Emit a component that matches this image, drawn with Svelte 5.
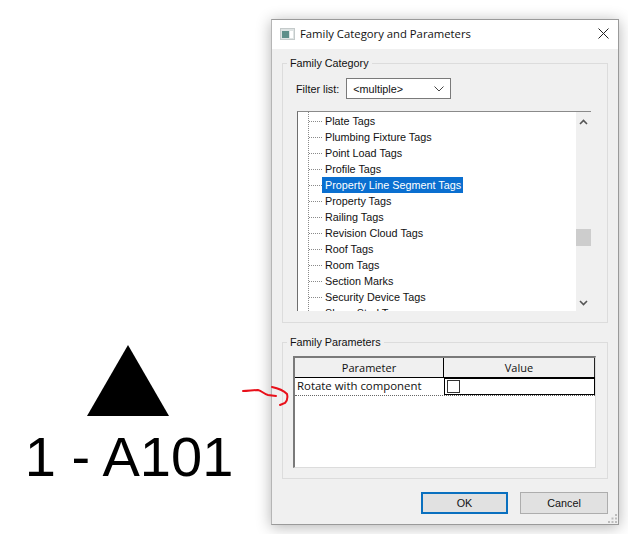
<script lang="ts">
  const items = [
    'Plate Tags',
    'Plumbing Fixture Tags',
    'Point Load Tags',
    'Profile Tags',
    'Property Line Segment Tags',
    'Property Tags',
    'Railing Tags',
    'Revision Cloud Tags',
    'Roof Tags',
    'Room Tags',
    'Section Marks',
    'Security Device Tags',
    'Shear Stud Tags'
  ];
  const selected = 'Property Line Segment Tags';
</script>

<div class="page">
  <div class="symbol">
    <svg class="triangle" width="82" height="71" viewBox="0 0 82 71">
      <polygon points="41,0 82,71 0,71" fill="#000" />
    </svg>
    <div class="mark">1 - A101</div>
  </div>

  <div class="dialog">
    <header class="titlebar">
      <svg width="15" height="12" viewBox="0 0 15 12">
        <rect x="0.5" y="0.5" width="14" height="11" fill="#dfe4e4" stroke="#c4caca" />
        <rect x="2" y="3" width="7" height="7" fill="#5f8f8a" />
        <rect x="10" y="3" width="3" height="7" fill="#fff" />
      </svg>
      <span class="title">Family Category and Parameters</span>
      <svg class="close" width="11" height="11" viewBox="0 0 11 11">
        <path d="M0.5 0.5 L10.5 10.5 M10.5 0.5 L0.5 10.5" stroke="#222" fill="none" />
      </svg>
    </header>

    <div class="body">
      <fieldset class="category">
        <legend>Family Category</legend>
        <div class="filter">
          <span>Filter list:</span>
          <div class="select">
            <span>&lt;multiple&gt;</span>
            <svg width="10" height="6" viewBox="0 0 10 6">
              <path d="M0.5 0.5 L5 5 L9.5 0.5" stroke="#444" fill="none" />
            </svg>
          </div>
        </div>
        <div class="tree">
          <ul>
            {#each items as item}
              <li><span class:selected={item === selected}>{item}</span></li>
            {/each}
          </ul>
          <div class="scrollbar">
            <svg width="9" height="6" viewBox="0 0 9 6">
              <path d="M1 5 L4.5 1.5 L8 5" stroke="#555" stroke-width="1.6" fill="none" />
            </svg>
            <div class="track"><div class="thumb"></div></div>
            <svg width="9" height="6" viewBox="0 0 9 6">
              <path d="M1 1 L4.5 4.5 L8 1" stroke="#555" stroke-width="1.6" fill="none" />
            </svg>
          </div>
        </div>
      </fieldset>

      <fieldset class="parameters">
        <legend>Family Parameters</legend>
        <div class="table">
          <div class="head">
            <div class="col-name">Parameter</div>
            <div class="col-value">Value</div>
          </div>
          <div class="row">
            <div class="cell-name">Rotate with component</div>
            <div class="cell-value"><div class="checkbox"></div></div>
          </div>
        </div>
      </fieldset>

      <div class="actions">
        <button class="ok">OK</button>
        <button>Cancel</button>
      </div>
    </div>

    <svg class="grip" width="9" height="9" viewBox="0 0 9 9" fill="#bdbdbd">
      <rect x="7" y="0" width="2" height="2" />
      <rect x="3.5" y="3.5" width="2" height="2" />
      <rect x="7" y="3.5" width="2" height="2" />
      <rect x="0" y="7" width="2" height="2" />
      <rect x="3.5" y="7" width="2" height="2" />
      <rect x="7" y="7" width="2" height="2" />
    </svg>
  </div>

  <!-- hand drawn markup on top of the screenshot -->
  <svg class="arrow" width="50" height="24" viewBox="0 0 50 24">
    <path
      d="M1 6 C6 6 11 5 16 5 C20 6 22 9 26 10 L34 11 M30 2 C35 3 41 5 45 9 C46 13 45 16 43 18 L38 20"
      stroke="#e8101a"
      stroke-width="2"
      stroke-linecap="round"
      fill="none"
    />
  </svg>
</div>

<style>
  :global(body) {
    margin: 0;
    background: #fff;
  }

  .page {
    position: relative;
    display: flex;
    width: 628px;
    height: 534px;
    overflow: hidden;
    background: #fff;
    color: #111;
    font-family: 'Liberation Sans', Arial, sans-serif;
    font-size: 10.8px;
  }

  .symbol {
    width: 256px;
    margin-right: 15px;
    padding-top: 345px;
    display: flex;
    flex-direction: column;
    align-items: center;
  }

  .triangle {
    display: block;
  }

  .mark {
    margin-top: 9px;
    padding-left: 2px;
    font-size: 56px;
    line-height: 64px;
    color: #000;
    white-space: nowrap;
  }

  .dialog {
    position: relative;
    width: 348px;
    height: 506px;
    margin-top: 19px;
    background: #f0f0f0;
    border: 1px solid #9a9a9a;
    border-left-color: #b5b5b5;
    box-sizing: border-box;
    box-shadow: 0 2px 14px rgba(0, 0, 0, 0.3);
  }

  .titlebar {
    display: flex;
    align-items: center;
    height: 29px;
    padding: 0 9px 2px 8px;
    background: #fff;
    box-sizing: border-box;
  }

  .title {
    margin-left: 5px;
    flex: 1;
    font-family: 'Open Sans', 'Noto Sans', sans-serif;
    font-size: 11.3px;
  }

  .body {
    padding: 6px 10px 0;
  }

  fieldset {
    margin: 0;
    padding: 0;
    border: 1px solid #dcdcdc;
    box-sizing: border-box;
  }

  legend {
    margin-left: 4px;
    padding: 0 3px;
    line-height: 16px;
  }

  .category {
    height: 268px;
  }

  .filter {
    display: flex;
    align-items: center;
    height: 21px;
    margin: 7px 0 0 13px;
  }

  .filter > span {
    margin-right: 7px;
  }

  .select {
    display: flex;
    align-items: center;
    justify-content: space-between;
    width: 105px;
    height: 21px;
    padding: 0 6px;
    background: #fff;
    border: 1px solid #7a7a7a;
    box-sizing: border-box;
  }

  .tree {
    display: flex;
    height: 200px;
    margin: 12px 16px 0 14px;
    background: #fff;
    border-top: 1px solid #8a8a8a;
    border-left: 1px solid #6e6e6e;
    box-sizing: border-box;
    overflow: hidden;
  }

  ul {
    position: relative;
    flex: 1;
    list-style: none;
    margin: 0;
    padding: 1px 0 0 24px;
    overflow: hidden;
  }

  ul::before {
    content: '';
    position: absolute;
    left: 10px;
    top: 0;
    bottom: 0;
    border-left: 1px dotted #8a8a8a;
  }

  li {
    position: relative;
    height: 16px;
    line-height: 16px;
    white-space: nowrap;
  }

  li::before {
    content: '';
    position: absolute;
    left: -13px;
    top: 8px;
    width: 13px;
    border-top: 1px dotted #8a8a8a;
  }

  li span {
    display: inline-block;
    padding: 0 2px 0 3px;
  }

  li span.selected {
    background: #0a6fd0;
    color: #fff;
  }

  .scrollbar {
    display: flex;
    flex-direction: column;
    align-items: center;
    width: 15px;
    padding: 7px 0 5px;
    background: #f0f0f0;
    box-sizing: border-box;
  }

  .track {
    flex: 1;
    width: 100%;
    padding-top: 104px;
    box-sizing: border-box;
  }

  .thumb {
    height: 17px;
    background: #cdcdcd;
  }

  .parameters {
    height: 145px;
    margin-top: 11px;
  }

  .table {
    height: 112px;
    margin: 6px 11px 0 10px;
    background: #fff;
    border-top: 2px solid #7a7a7a;
    border-left: 2px solid #7a7a7a;
    border-right: 1px solid #dcdcdc;
    border-bottom: 1px solid #dcdcdc;
    box-sizing: border-box;
    font-family: 'Open Sans', 'Noto Sans', sans-serif;
    font-size: 11.4px;
  }

  .head {
    display: flex;
    height: 20px;
    line-height: 19px;
    font-size: 11px;
    text-align: center;
    background: #f0f0f0;
    border-bottom: 1px solid #000;
    box-sizing: border-box;
  }

  .col-name {
    width: 148px;
    border-right: 1px solid #000;
  }

  .col-value {
    flex: 1;
    border-right: 1px solid #222;
  }

  .row {
    display: flex;
    height: 18px;
    line-height: 15px;
    border-bottom: 1px dotted #666;
    box-sizing: border-box;
  }

  .cell-name {
    width: 149px;
    padding-left: 2px;
    box-sizing: border-box;
  }

  .cell-value {
    flex: 1;
    padding: 1px 0 0 2px;
    border: 1px solid #000;
    border-top-width: 2px;
    margin-top: -1px;
    box-sizing: border-box;
  }

  .checkbox {
    width: 13px;
    height: 13px;
    background: #fff;
    border: 1px solid #333;
    box-sizing: border-box;
  }

  .actions {
    display: flex;
    justify-content: flex-end;
    gap: 12px;
    margin-top: 13px;
  }

  button {
    width: 88px;
    height: 22px;
    padding: 0;
    font: inherit;
    color: inherit;
    background: #e1e1e1;
    border: 1px solid #adadad;
    box-sizing: border-box;
  }

  button.ok {
    width: 87px;
    border: 2px solid #0a70bf;
  }

  .grip {
    position: absolute;
    right: 1px;
    bottom: 1px;
  }

  .arrow {
    position: absolute;
    left: 242px;
    top: 385px;
  }
</style>
